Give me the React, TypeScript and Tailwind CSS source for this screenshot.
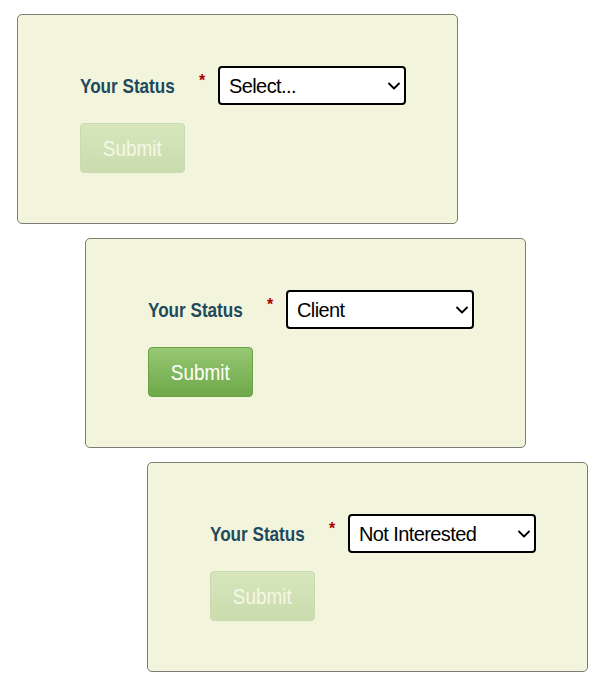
import { useState } from 'react';
import { ChevronDown } from 'lucide-react';

const FONT = '"Liberation Sans", Arial, sans-serif';

const OPTIONS = ['Select...', 'Client', 'Not Interested'];

function StatusCard({ initial, offset }: { initial: string; offset: string }) {
  const [status, setStatus] = useState(initial);
  // only a real client can submit
  const enabled = status === 'Client';

  return (
    <form
      className={`w-[441px] h-[210px] rounded-[5px] border border-[#7c7c74] bg-[#f3f4dc] pl-[62px] pt-[51px] ${offset}`}
      style={{ fontFamily: FONT }}
      onSubmit={(e) => e.preventDefault()}
    >
      <div className="flex items-center">
        <label className="w-[119px] h-[24px] text-[21px] leading-[24px] font-bold text-[#1d4a5c] whitespace-nowrap">
          <span className="inline-block origin-left scale-x-[0.815]">Your Status</span>
        </label>
        <span className="w-[19px] text-[16px] font-bold text-[#a80000] -mt-[9px]">*</span>
        <div className="relative">
          <select
            value={status}
            onChange={(e) => setStatus(e.target.value)}
            className="appearance-none w-[188px] h-[39px] rounded-[4px] border-2 border-black bg-white pl-[9px] text-[20px] tracking-[-0.6px] text-black"
            style={{ fontFamily: FONT }}
          >
            {OPTIONS.map((o) => (
              <option key={o}>{o}</option>
            ))}
          </select>
          <ChevronDown
            className="pointer-events-none absolute right-[2px] top-[10px] w-[20px] h-[20px] text-black"
            strokeWidth={2.2}
          />
        </div>
      </div>
      <button
        type="submit"
        disabled={!enabled}
        className="mt-[18px] w-[105px] h-[50px] rounded-[4px] border border-[#6b9f48] bg-gradient-to-b from-[#97c873] to-[#6ea848] text-[22px] text-white disabled:opacity-30"
      >
        <span className="inline-block scale-x-[0.86]">Submit</span>
      </button>
    </form>
  );
}

export default function App() {
  return (
    <div className="bg-white w-[608px] h-[688px] pt-[14px] flex flex-col gap-[14px]">
      <StatusCard initial="Select..." offset="ml-[17px]" />
      <StatusCard initial="Client" offset="ml-[85px]" />
      <StatusCard initial="Not Interested" offset="ml-[147px]" />
    </div>
  );
}
